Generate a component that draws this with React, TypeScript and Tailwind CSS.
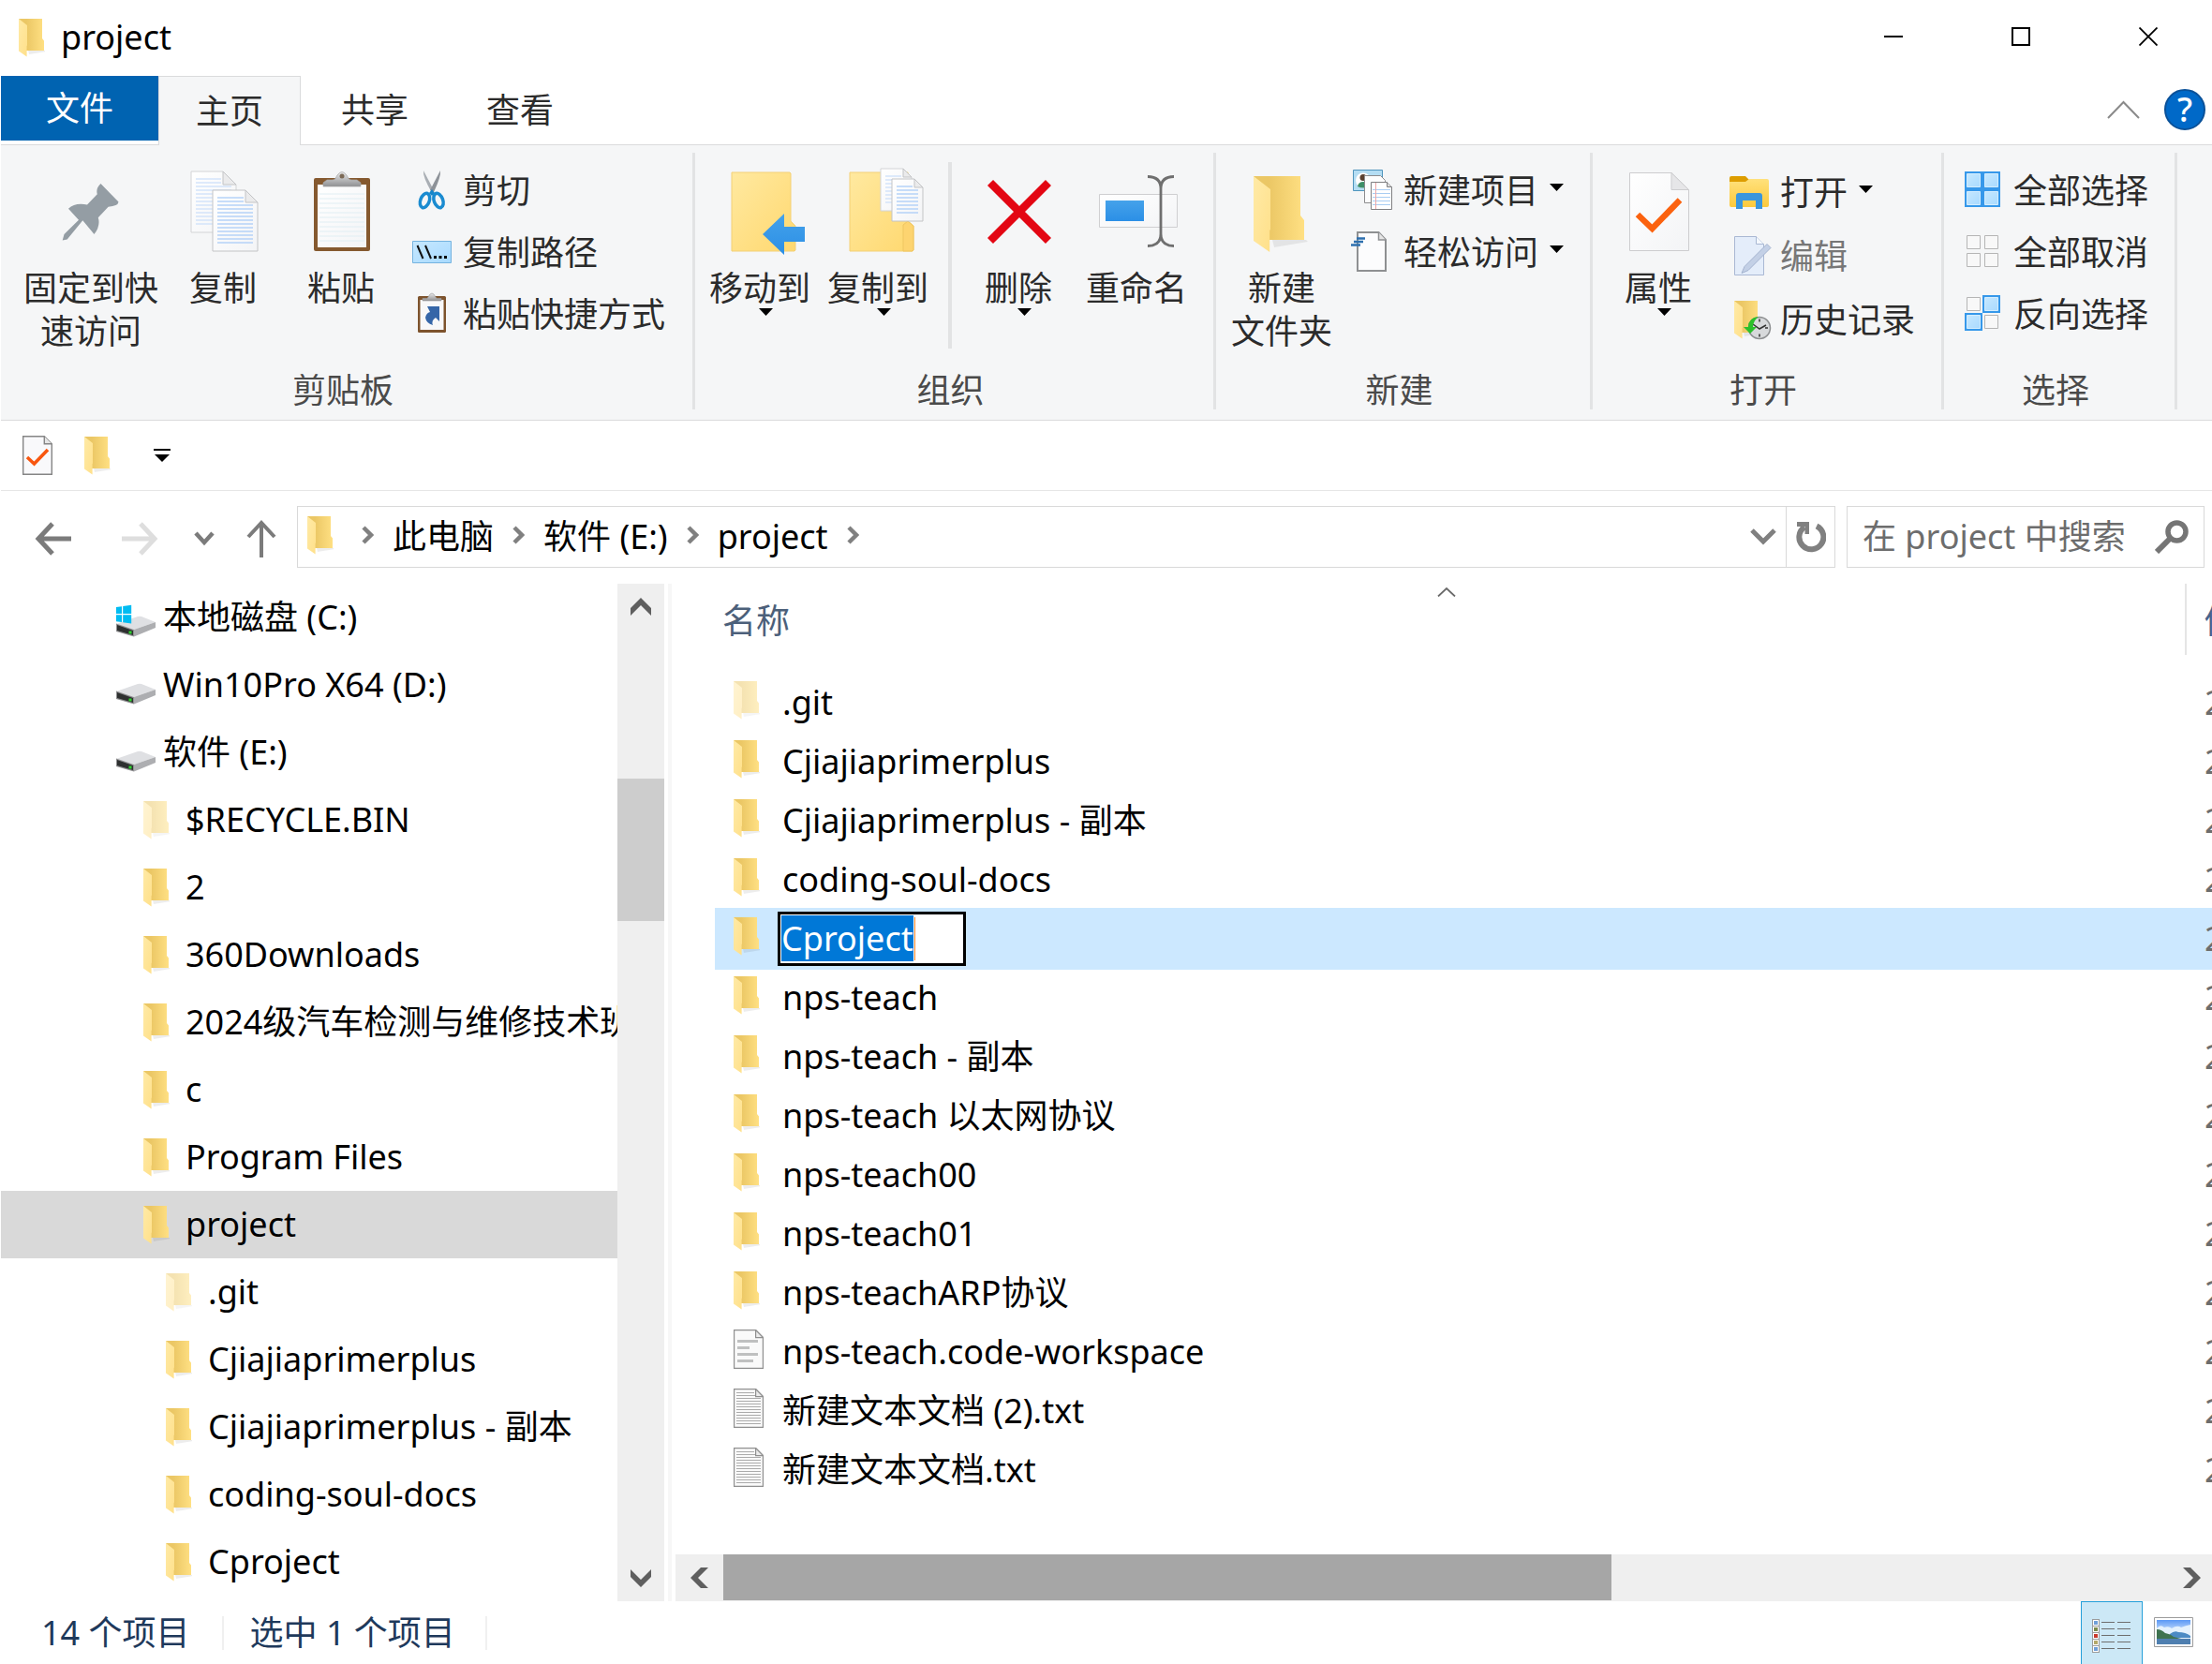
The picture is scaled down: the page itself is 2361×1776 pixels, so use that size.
import { useEffect, useRef, type ReactNode } from "react";

interface TreeNode {
  name: string;
  level: 1 | 2 | 3;
  icon: "system" | "drive" | "folder" | "hidden";
  current?: boolean;
}

interface FileEntry {
  name: string;
  icon: "folder" | "hidden" | "code" | "text";
  renaming?: boolean;
}

const TREE: TreeNode[] = [
  { name: "本地磁盘 (C:)", level: 1, icon: "system" },
  { name: "Win10Pro X64 (D:)", level: 1, icon: "drive" },
  { name: "软件 (E:)", level: 1, icon: "drive" },
  { name: "$RECYCLE.BIN", level: 2, icon: "hidden" },
  { name: "2", level: 2, icon: "folder" },
  { name: "360Downloads", level: 2, icon: "folder" },
  { name: "2024级汽车检测与维修技术班", level: 2, icon: "folder" },
  { name: "c", level: 2, icon: "folder" },
  { name: "Program Files", level: 2, icon: "folder" },
  { name: "project", level: 2, icon: "folder", current: true },
  { name: ".git", level: 3, icon: "hidden" },
  { name: "Cjiajiaprimerplus", level: 3, icon: "folder" },
  { name: "Cjiajiaprimerplus - 副本", level: 3, icon: "folder" },
  { name: "coding-soul-docs", level: 3, icon: "folder" },
  { name: "Cproject", level: 3, icon: "folder" },
];

const FILES: FileEntry[] = [
  { name: ".git", icon: "hidden" },
  { name: "Cjiajiaprimerplus", icon: "folder" },
  { name: "Cjiajiaprimerplus - 副本", icon: "folder" },
  { name: "coding-soul-docs", icon: "folder" },
  { name: "Cproject", icon: "folder", renaming: true },
  { name: "nps-teach", icon: "folder" },
  { name: "nps-teach - 副本", icon: "folder" },
  { name: "nps-teach 以太网协议", icon: "folder" },
  { name: "nps-teach00", icon: "folder" },
  { name: "nps-teach01", icon: "folder" },
  { name: "nps-teachARP协议", icon: "folder" },
  { name: "nps-teach.code-workspace", icon: "code" },
  { name: "新建文本文档 (2).txt", icon: "text" },
  { name: "新建文本文档.txt", icon: "text" },
];

const INDENT = { 1: "pl-[123px] gap-2", 2: "pl-[152px] gap-[17px]", 3: "pl-[176px] gap-[17px]" };

export default function App() {
  return (
    <div className="flex h-screen flex-col overflow-hidden bg-white pl-px font-['Noto_Sans','Noto_Sans_CJK_SC',sans-serif] text-[36px] leading-[46px] text-black">
      <Gradients />
      <TitleBar />
      <TabStrip />
      <Ribbon />
      <QuickAccess />
      <AddressBar />
      <main className="flex min-h-0 flex-1">
        <TreePane />
        <FilePane />
      </main>
      <StatusBar />
    </div>
  );
}

function TitleBar() {
  return (
    <header className="flex h-[81px] shrink-0 items-stretch justify-between">
      <div className="flex items-center gap-[17px] pb-0.5 pl-[19px]">
        <FolderIcon className="h-[42px] w-7" />
        <h1>project</h1>
      </div>
      <div className="flex">
        <button aria-label="最小化" className="flex w-[136px] items-center justify-center">
          <svg className="size-5" viewBox="0 0 20 20"><path d="M0 8h20" stroke="#000" strokeWidth="2" /></svg>
        </button>
        <button aria-label="最大化" className="flex w-[136px] items-center justify-center">
          <svg className="mb-1 size-5" viewBox="0 0 20 20"><path d="M1 1h18v18H1z" fill="none" stroke="#000" strokeWidth="2" /></svg>
        </button>
        <button aria-label="关闭" className="flex w-[136px] items-center justify-center">
          <svg className="mb-1 size-5" viewBox="0 0 20 20"><path d="M.5.5l19 19m0-19l-19 19" stroke="#000" strokeWidth="1.8" /></svg>
        </button>
      </div>
    </header>
  );
}

function TabStrip() {
  return (
    <nav className="flex h-[74px] shrink-0 border-b border-[#dadbdc] text-[#2b2b2b]">
      <button className="mb-1 w-[168px] bg-[#0063b1] text-white">文件</button>
      <button className="-mb-px w-[152px] border border-b-0 border-[#dadbdc] bg-[#f5f6f7]">主页</button>
      <button className="ml-[3px] w-[152px]">共享</button>
      <button className="ml-[3px] w-[152px]">查看</button>
      <div className="ml-auto flex items-center gap-[26px] pb-0.5 pr-[7px]">
        <button aria-label="折叠功能区">
          <svg className="h-5 w-[35px]" viewBox="0 0 35 20"><path d="M1 19L17.500 2 34 19" fill="none" stroke="#8a8a8a" strokeWidth="2" /></svg>
        </button>
        <button aria-label="帮助" className="flex size-11 items-center justify-center rounded-full border-2 border-[#0a5199] bg-[#0069c8] font-medium text-white">?</button>
      </div>
    </nav>
  );
}

function Ribbon() {
  return (
    <section className="flex h-[294px] shrink-0 border-b border-[#dadbdc] bg-[#f5f6f7] text-[#2b2b2b]">
      <Group label="剪贴板" className="pl-[18px] pr-[29px]">
        <BigButton lines={["固定到快", "速访问"]} wide icon={<PinArt />} />
        <BigButton lines={["复制"]} icon={<CopyArt />} />
        <BigButton lines={["粘贴"]} icon={<ClipboardArt />} />
        <div className="ml-[13px] pt-2">
          <SmallButton label="剪切" icon={<ScissorsArt />} />
          <SmallButton label="复制路径" icon={<PathArt />} />
          <SmallButton label="粘贴快捷方式" icon={<ShortcutArt />} />
        </div>
      </Group>
      <Group label="组织" className="pl-[6px] pr-[19px]">
        <BigButton lines={["移动到"]} menu icon={<MoveArt />} />
        <BigButton lines={["复制到"]} menu icon={<CopyToArt />} />
        <div className="ml-3 mr-2 mt-2.5 h-[199px] w-1 bg-[#e2e3e4]" />
        <BigButton lines={["删除"]} menu icon={<DeleteArt />} />
        <BigButton lines={["重命名"]} icon={<RenameArt />} />
      </Group>
      <Group label="新建" className="pl-[7px] pr-7">
        <BigButton lines={["新建", "文件夹"]} icon={<NewFolderArt />} />
        <div className="ml-[13px] pt-2">
          <SmallButton label="新建项目" menu icon={<NewItemArt />} />
          <SmallButton label="轻松访问" menu icon={<EasyAccessArt />} />
        </div>
      </Group>
      <Group label="打开" className="pl-[7px] pr-7">
        <BigButton lines={["属性"]} menu icon={<PropertiesArt />} />
        <div className="ml-[13px] pt-[9px]">
          <SmallButton label="打开" menu tall icon={<OpenArt />} />
          <SmallButton label="编辑" disabled tall icon={<EditArt />} />
          <SmallButton label="历史记录" tall icon={<HistoryArt />} />
        </div>
      </Group>
      <Group label="选择" className="pl-5 pr-7">
        <div className="pt-2">
          <SmallButton label="全部选择" icon={<SelectArt on={[true, true, true, true]} all />} />
          <SmallButton label="全部取消" icon={<SelectArt on={[false, false, false, false]} />} />
          <SmallButton label="反向选择" icon={<SelectArt on={[false, true, true, false]} />} />
        </div>
      </Group>
    </section>
  );
}

function Group({ label, className, children }: { label: string; className: string; children: ReactNode }) {
  return (
    <div className="mb-[11px] mt-2 flex flex-col border-r-3 border-[#e2e3e4]">
      <div className={`flex flex-1 items-start ${className}`}>{children}</div>
      <p className="pr-2 text-center leading-10 text-[#4a4a4a]">{label}</p>
    </div>
  );
}

function BigButton({ lines, icon, menu, wide }: { lines: string[]; icon: ReactNode; menu?: boolean; wide?: boolean }) {
  return (
    <button className={`flex flex-col items-center pt-3.5 ${wide ? "w-[156px]" : "w-[126px]"}`}>
      <svg className="mb-3 size-24 overflow-visible" viewBox="0 0 96 96">{icon}</svg>
      {lines.map((l) => <span key={l} className="whitespace-nowrap">{l}</span>)}
      {menu && <Triangle className="-mt-0.5 ml-3" />}
    </button>
  );
}

function SmallButton({ label, icon, menu, disabled, tall }: {
  label: string; icon: ReactNode; menu?: boolean; disabled?: boolean; tall?: boolean;
}) {
  return (
    <button
      disabled={disabled}
      className={`flex items-center gap-3 whitespace-nowrap disabled:text-[#777] ${tall ? "h-[68px]" : "h-[66px]"}`}
    >
      <svg className="h-11 w-[42px] overflow-visible" viewBox="0 0 42 44">{icon}</svg>
      {label}
      {menu && <Triangle className="mb-2" />}
    </button>
  );
}

function Triangle({ className }: { className: string }) {
  return <svg className={`h-2 w-[15px] ${className}`} viewBox="0 0 15 8"><path d="M0 0h15L7.500 8z" fill="#000" /></svg>;
}

function QuickAccess() {
  return (
    <div className="flex h-[75px] shrink-0 items-center border-b border-[#e6e6e6] pl-[23px]">
      <button aria-label="属性">
        <svg className="h-[42px] w-8" viewBox="0 0 32 42">
          <path d="M.7.7h22.600l8 8v32.600H.7z" fill="#f9f9fb" stroke="#858585" strokeWidth="1.400" />
          <path d="M23.300.7v8h8" fill="#e6e6e6" stroke="#858585" strokeWidth="1.400" />
          <path d="M5 23l7.500 7L27 15" fill="none" stroke="#f8560f" strokeWidth="3.500" />
        </svg>
      </button>
      <button aria-label="新建文件夹" className="ml-[34px]"><FolderIcon className="h-[42px] w-7" /></button>
      <button aria-label="自定义快速访问工具栏" className="ml-[46px]">
        <svg className="h-3.5 w-[18px]" viewBox="0 0 18 14"><path d="M0 0h18v2H0zM1 6h16l-8 8z" /></svg>
      </button>
    </div>
  );
}

function AddressBar() {
  const crumbs = ["此电脑", "软件 (E:)", "project"];
  return (
    <div className="flex h-[99px] shrink-0 items-start pl-[10px] pr-2 pt-4">
      <div className="flex h-[66px] items-center pt-1">
        <button aria-label="返回" className="flex w-[92px] justify-center">
          <svg className="h-9 w-10" viewBox="0 0 40 36"><path d="M39 18H4M19 2L4 18l15 16" fill="none" stroke="#7b7b7b" strokeWidth="5" /></svg>
        </button>
        <button aria-label="前进" disabled className="flex w-[92px] justify-center">
          <svg className="h-9 w-10" viewBox="0 0 40 36"><path d="M1 18h35M21 2l15 16-15 16" fill="none" stroke="#dedede" strokeWidth="5" /></svg>
        </button>
        <button aria-label="最近浏览的位置" className="flex w-[46px] justify-center">
          <svg className="h-4 w-[22px]" viewBox="0 0 22 16"><path d="M2 2l9 10 9-10" fill="none" stroke="#7b7b7b" strokeWidth="4.500" /></svg>
        </button>
        <button aria-label="上移" className="flex w-[76px] justify-center">
          <svg className="h-10 w-8" viewBox="0 0 32 40"><path d="M16 40V3M2 18L16 3l14 15" fill="none" stroke="#7b7b7b" strokeWidth="4" /></svg>
        </button>
      </div>
      <div className="flex h-[66px] flex-1 items-center border border-[#d9d9d9] pl-2.5">
        <FolderIcon className="mb-1 mr-[30px] h-[42px] w-7" />
        <Chevron />
        {crumbs.map((c) => (
          <span key={c} className="flex items-center">
            <button className="mx-5 whitespace-nowrap">{c}</button>
            <Chevron />
          </span>
        ))}
        <button aria-label="以前的位置" className="ml-auto px-2.5">
          <svg className="h-[18px] w-7" viewBox="0 0 28 18"><path d="M2 2l12 12L26 2" fill="none" stroke="#808080" strokeWidth="5" /></svg>
        </button>
        <button aria-label="刷新" className="flex h-full w-[52px] items-center justify-center border-l border-[#d9d9d9]">
          <svg className="h-[34px] w-8" viewBox="0 0 32 34">
            <path d="M22 5.500A13 13 0 1 1 9 6.500" fill="none" stroke="#808080" strokeWidth="6" />
            <path d="M1 1h13v13h-4.500V6H1z" fill="#808080" />
          </svg>
        </button>
      </div>
      <label className="ml-3 flex h-[66px] w-[382px] items-center border border-[#d9d9d9] pl-4 pr-4">
        <input aria-label="搜索" placeholder="在 project 中搜索" className="min-w-0 flex-1 outline-none placeholder:text-[#6d6d6d]" />
        <svg className="size-9" viewBox="0 0 36 36">
          <circle cx="23.500" cy="12.500" r="9.500" fill="none" stroke="#757575" strokeWidth="5.500" />
          <path d="M17 19L2 34" stroke="#757575" strokeWidth="6" />
        </svg>
      </label>
    </div>
  );
}

function Chevron() {
  return <svg className="mb-1 h-5 w-[13px]" viewBox="0 0 13 20"><path d="M2 2l8 8-8 8" fill="none" stroke="#808080" strokeWidth="4.500" /></svg>;
}

function TreePane() {
  return (
    <aside className="flex w-[716px] shrink-0 border-r-4 border-[#f7f7f7]">
      <ul className="min-w-0 flex-1 overflow-hidden">
        {TREE.map((n) => (
          <li key={`${n.level}-${n.name}`} className={`flex h-[72px] items-center whitespace-nowrap ${INDENT[n.level]} ${n.current ? "bg-[#d9d9d9]" : ""}`}>
            {n.level === 1
              ? <DriveIcon system={n.icon === "system"} />
              : <FolderIcon className={`h-[42px] w-7 shrink-0 ${n.icon === "hidden" ? "opacity-50" : ""}`} />}
            <span>{n.name}</span>
          </li>
        ))}
      </ul>
      <div className="mr-1 flex w-[50px] flex-col bg-[#efefef]">
        <button aria-label="向上滚动" className="flex h-[50px] items-center justify-center">
          <svg className="h-5 w-[22px]" viewBox="0 0 22 20"><path d="M0 19v-8L11 0l11 11v8L11 8z" fill="#5f5f5f" /></svg>
        </button>
        <div className="mt-[158px] h-[152px] bg-[#cdcdcd]" />
        <button aria-label="向下滚动" className="mt-auto flex h-[50px] items-center justify-center">
          <svg className="h-5 w-[22px]" viewBox="0 0 22 20"><path d="M0 1v8l11 11L22 9V1L11 12z" fill="#5f5f5f" /></svg>
        </button>
      </div>
    </aside>
  );
}

function FilePane() {
  return (
    <section className="flex min-w-0 flex-1 flex-col pl-1">
      <div className="min-h-0 flex-1 overflow-hidden pl-[42px]">
        <table className="w-full table-fixed border-separate border-spacing-0 text-left">
          <thead>
            <tr className="text-[#4c607a]">
              <th className="relative h-[76px] border-r-2 border-[#e5e5e5] py-0 pl-2 pt-1 font-normal">
                名称
                <svg className="absolute left-1/2 top-1 -ml-1 h-2.5 w-5 -translate-x-1/2" viewBox="0 0 20 10"><path d="M1 9.500L10 1l9 8.500" fill="none" stroke="#6a6a6a" strokeWidth="1.800" /></svg>
              </th>
              <th className="w-[27px] overflow-hidden whitespace-nowrap p-0 pl-[19px] pt-1 font-normal text-[#47638c]">修改日期</th>
            </tr>
            <tr aria-hidden="true" className="h-[18px]" />
          </thead>
          <tbody>
            {FILES.map((f) => <FileRow key={f.name} file={f} />)}
          </tbody>
        </table>
      </div>
      <div className="flex h-[50px] shrink-0 bg-[#efefef]">
        <button aria-label="向左滚动" className="flex w-[51px] items-center justify-center">
          <svg className="h-[22px] w-5" viewBox="0 0 20 22"><path d="M19 0h-8L0 11l11 11h8L8 11z" fill="#5f5f5f" /></svg>
        </button>
        <div className="mb-px flex-[947] bg-[#a6a6a6]" />
        <div className="flex-[597]" />
        <button aria-label="向右滚动" className="flex w-11 items-center justify-center">
          <svg className="h-[22px] w-5" viewBox="0 0 20 22"><path d="M1 0h8l11 11L9 22H1l11-11z" fill="#5f5f5f" /></svg>
        </button>
      </div>
    </section>
  );
}

function FileRow({ file }: { file: FileEntry }) {
  return (
    <tr className={`h-[63px] ${file.renaming ? "bg-[#cce8ff] shadow-[0_3px_0_#cce8ff]" : ""}`}>
      <td className="p-0 pl-5">
        <div className="flex items-center">
          <FileIcon kind={file.icon} />
          {file.renaming ? <RenameBox name={file.name} /> : <span className="ml-5 whitespace-nowrap pt-0.5">{file.name}</span>}
        </div>
      </td>
      <td className="overflow-hidden whitespace-nowrap p-0 pl-[19px] pt-0.5 text-[#6d6d6d]">2024</td>
    </tr>
  );
}

function RenameBox({ name }: { name: string }) {
  const ref = useRef<HTMLInputElement>(null);

  useEffect(() => {
    ref.current?.focus();
    ref.current?.select();
  }, []);

  return (
    <div className="relative ml-[15px] pt-0.5">
      <input
        ref={ref}
        aria-label="重命名"
        defaultValue={name}
        className="block h-[58px] w-[201px] border-3 border-black bg-white px-px leading-[46px] outline-none selection:bg-[#0078d7] selection:text-white"
      />
      {/* caret at the end of the selection */}
      <span className="absolute left-[146px] top-2 h-[46px] w-px bg-[#ff8728]" />
    </div>
  );
}

function StatusBar() {
  return (
    <footer className="flex h-[67px] shrink-0 items-stretch pl-[43px] text-[#1e395b]">
      <div className="flex items-center">
        <span className="border-r-2 border-[#f0f0f0] pr-[34px] leading-9">14 个项目</span>
        <span className="border-r-2 border-[#f0f0f0] pl-7 pr-8 leading-9">选中 1 个项目</span>
      </div>
      <div className="ml-auto flex">
        <button aria-label="详细信息" className="flex w-[66px] justify-center border border-b-0 border-[#26a0da] bg-[#cce8f6] pt-[18px]">
          <svg className="h-9 w-[42px]" viewBox="0 0 42 36">
            {["#6f9fd8", "#7a8a4a", "#c8382c", "#b3a86a", "#6f9fd8"].map((c, i) => (
              <g key={i}>
                <rect x=".5" y={0.500 + i * 7} width="7" height="7" fill="#fff" stroke="#9c9c9c" />
                <rect x="2" y={2 + i * 7} width="4" height="4" fill={c} />
                <path d={`M10 ${3.500 + i * 7}h14m3 0h14`} stroke="#6e6e6e" />
              </g>
            ))}
          </svg>
        </button>
        <button aria-label="大图标" className="flex w-[74px] items-center justify-center pb-0.5 pl-px pr-[9px]">
          <svg className="h-8 w-[42px]" viewBox="0 0 42 32">
            <path d="M.5.5h41v31H.5z" fill="#fff" stroke="#9c9c9c" />
            <path d="M3 3h36v26H3z" fill="url(#sky)" />
            <path d="M3 12q4-5 8-1 5-2 8 1 6-4 10-1 5-2 10-3v14H3z" fill="#e4f1fd" />
            <path d="M17 18q5-4 9-2 8 0 13 4v2H17z" fill="#4b8ac4" />
            <path d="M3 13q5 0 9 4 6 1 9 4l8 2H3z" fill="#3f7350" />
            <path d="M3 23h36v6H3z" fill="#4f7fb0" />
          </svg>
        </button>
      </div>
    </footer>
  );
}

/* Icons */

function Gradients() {
  return (
    <svg className="absolute size-0" aria-hidden="true">
      <defs>
        <linearGradient id="folderBack"><stop offset=".3" stopColor="#ebc765" /><stop offset="1" stopColor="#ffe083" /></linearGradient>
        <linearGradient id="folderFlap" x2="1" y2="1"><stop offset="0" stopColor="#ffeaa6" /><stop offset="1" stopColor="#ffe08a" /></linearGradient>
        <linearGradient id="folderFlat" x2="1" y2="1"><stop offset="0" stopColor="#ffe9a0" /><stop offset="1" stopColor="#ffd86f" /></linearGradient>
        <linearGradient id="paper" x2="1" y2="1"><stop offset="0" stopColor="#fff" /><stop offset="1" stopColor="#f3f4f6" /></linearGradient>
        <linearGradient id="blue" y2="1" x2="0"><stop offset="0" stopColor="#45a2ea" /><stop offset="1" stopColor="#2b8fe6" /></linearGradient>
        <linearGradient id="cell" x2="1" y2="1"><stop offset="0" stopColor="#c6e8ff" /><stop offset="1" stopColor="#a8daff" /></linearGradient>
        <linearGradient id="explorer" y2="1" x2="0"><stop offset="0" stopColor="#ffe17c" /><stop offset="1" stopColor="#fcc93c" /></linearGradient>
        <linearGradient id="sky" y2="1" x2="0"><stop offset="0" stopColor="#5b98f5" /><stop offset=".6" stopColor="#e5f2ff" /></linearGradient>
        <linearGradient id="metal" y2="1" x2="0"><stop offset="0" stopColor="#e9e9ea" /><stop offset="1" stopColor="#8f9092" /></linearGradient>
      </defs>
    </svg>
  );
}

function FolderShape() {
  return (
    <>
      <path d="M10 34h18l1 1-18 3z" fill="#000" opacity=".07" />
      <path d="M0 0h25v21l2 2.500V34H8z" fill="url(#folderBack)" />
      <path d="M0 0l9 7v21.500L8.600 29v11.500L0 34.500z" fill="url(#folderFlap)" />
    </>
  );
}

function FolderIcon({ className }: { className: string }) {
  return <svg className={className} viewBox="0 -1 28 42"><FolderShape /></svg>;
}

function DriveIcon({ system }: { system: boolean }) {
  return (
    <svg className="size-[42px] shrink-0" viewBox="0 0 42 42">
      <path d="M0 28l23-8q2-.5 4 0l15 6-23 8z" fill="#dfe0e3" />
      <path d="M19 34l23-8v6l-23 9.500z" fill="#adaeb1" />
      <path d="M0 27.500l19 6.500v7.500L0 36z" fill="#8f8f91" />
      <path d="M1 29l17 6v5L1 35z" fill="#2e3030" />
      <path d="M13.500 35.500h3v3h-3z" fill="#2fd32f" />
      {system && <path d="M0 10l6-.8V17H0zM7.200 9l9-1.300V17h-9zM0 18.200h6V26l-6-.8zM7.200 18.200h9v9.300l-9-1.300z" fill="#00bcf2" />}
    </svg>
  );
}

function FileIcon({ kind }: { kind: FileEntry["icon"] }) {
  if (kind === "folder" || kind === "hidden") {
    return <FolderIcon className={`mb-1 mr-1 h-[42px] w-7 ${kind === "hidden" ? "opacity-50" : ""}`} />;
  }
  return (
    <svg className="mb-1 h-[42px] w-8" viewBox="0 0 32 42">
      <path d="M.6.6h23l7.800 8v32.800H.6z" fill="#fafafa" stroke="#8f8f8f" strokeWidth="1.200" />
      {kind === "code"
        ? <path d="M4 12.500h22M4 19.500h13M4 26.500h22M4 33.500h17" stroke="#bfc0c0" strokeWidth="3" />
        : <path d="M3 4.500h19M3 7.500h20M3 10.500h26M3 13.500h26M3 16.500h26M3 19.500h26M3 22.500h26M3 25.500h26M3 28.500h26M3 31.500h26M3 34.500h26M3 37.500h26" stroke="#ababab" />}
      <path d="M23.600.6v8h7.800z" fill="#ececec" stroke="#8f8f8f" strokeWidth="1.200" />
    </svg>
  );
}

// Sheet with a folded corner and ruled lines
function Page({ x, y, w, h, fold, pale }: { x: number; y: number; w: number; h: number; fold: number; pale?: boolean }) {
  const rules = [];
  for (let ly = 8; ly < h - 6; ly += 4) rules.push(`M${x + 5} ${y + ly}H${ly < fold + 2 ? x + w - fold - 2 : x + w - 5}`);
  return (
    <g strokeWidth="1">
      <path d={`M${x} ${y}h${w - fold}l${fold} ${fold}v${h - fold}h${-w}z`} fill="url(#paper)" stroke={pale ? "#d3d4d6" : "#c3c4c6"} />
      <path d={rules.join("")} stroke={pale ? "#d3e4fa" : "#b5d2f7"} strokeWidth="1.300" />
      <path d={`M${x + w - fold} ${y}v${fold}h${fold}z`} fill="#ebebec" stroke="#c3c4c6" />
    </g>
  );
}

function PinArt() {
  return <path d="M58.500 19L77.500 38.500Q77 43 66.600 43.700L55.800 55.300Q58.500 64 51.500 73L39.300 58.300 22.700 78.500 17.700 79.500 19.500 73 35 57.700 24 45.700Q31 39 44 41.500L54.800 30.300Q53 24 58.500 19z" fill="#949da4" />;
}

function CopyArt() {
  return (
    <>
      <Page x={14} y={6} w={48} h={65} fold={14} pale />
      <Page x={37} y={26} w={48} h={65} fold={13} />
    </>
  );
}

function ClipboardArt() {
  return (
    <>
      <rect x="19" y="13" width="60" height="78" rx="2" fill="#85592f" />
      <path d="M23 20h52v67H23z" fill="url(#paper)" />
      <path d="M25 30h48M25 35h48M25 40h48M25 45h48M25 50h48M25 55h48M25 60h48M25 65h48M25 70h48M25 75h48M25 80h48" stroke="#e0eef3" />
      <path d="M29 22v-4l4-3h6q3 0 5-5 5-7 10 0 2 5 5 5h6l4 3v4z" fill="url(#metal)" stroke="#a3a3a5" strokeWidth=".7" />
      <circle cx="49" cy="11" r="2.500" fill="#7c6a56" />
    </>
  );
}

function MoveArt() {
  return (
    <>
      <path d="M18 7h62l1 1v51l5 5v26l-1 1H18z" fill="url(#folderFlat)" stroke="#f3d077" strokeWidth="1" />
      <path d="M51 73l23-22v14h22v16H74v14z" fill="url(#blue)" />
    </>
  );
}

function CopyToArt() {
  return (
    <>
      <path d="M18 7h62v52l6 5v26l-1 1H18z" fill="url(#folderFlat)" stroke="#f3d077" strokeWidth="1" />
      <path d="M75 91V63l5-4 6 5v26l-1 1z" fill="#fdd470" stroke="#efc660" />
      <Page x={51} y={3} w={33} h={45} fold={9} pale />
      <Page x={63} y={14} w={33} h={45} fold={9} />
    </>
  );
}

function DeleteArt() {
  return <path d="M18 18l62 62M80 18L18 80" stroke="#e30613" strokeWidth="8.500" />;
}

function RenameArt() {
  return (
    <>
      <path d="M8.500 30.500h83v35h-83z" fill="url(#paper)" stroke="#cfcfd1" />
      <path d="M15 37h41v22H15z" fill="url(#blue)" />
      <path d="M60 11.500q14 0 14 13v48q0 13-14 13M88 11.500q-14 0-14 13v48q0 13 14 13" fill="none" stroke="#6f6f6f" strokeWidth="2.800" />
    </>
  );
}

function NewFolderArt() {
  return <g transform="translate(18 11) scale(2)"><FolderShape /></g>;
}

function PropertiesArt() {
  return (
    <>
      <path d="M17.500 7.500H62l18.500 18v65h-63z" fill="url(#paper)" stroke="#cdcdcf" />
      <path d="M62 7.500v18h18.500z" fill="#e6e6e8" stroke="#cdcdcf" />
      <path d="M26 52l15.500 15L71 36.500" fill="none" stroke="#fb620f" strokeWidth="6.500" />
    </>
  );
}

function ScissorsArt() {
  return (
    <>
      <path d="M12 0q-1 6 8 22l3-1z" fill="#a9aeb4" />
      <path d="M30 0q1 6-7 23l-4-2z" fill="#8d9298" />
      <path d="M21 20l3 4-3 3-3-3z" fill="#1686c9" />
      <ellipse cx="13.500" cy="32" rx="4.700" ry="8" transform="rotate(20 13.500 32)" fill="none" stroke="#1a8bd0" strokeWidth="3.500" />
      <ellipse cx="28" cy="32" rx="4.700" ry="8" transform="rotate(-20 28 32)" fill="none" stroke="#1a8bd0" strokeWidth="3.500" />
    </>
  );
}

function PathArt() {
  return (
    <>
      <path d="M.5 9.500h41v23H.5z" fill="url(#cell)" stroke="#75b3df" />
      <path d="M5.500 14l6 14M14 14l6 14" stroke="#111" strokeWidth="2" />
      <path d="M23 25h3v3h-3zM28.500 25h3v3h-3zM34 25h3v3h-3z" />
    </>
  );
}

function ShortcutArt() {
  return (
    <>
      <rect x="6" y="2" width="30" height="39" rx="1.500" fill="#7d532d" />
      <path d="M8.500 6h25v32h-25z" fill="#f8f8f9" />
      <path d="M11 7V4.500h5L19 0q2-2 4 0l3 4.500h5V7z" fill="url(#metal)" stroke="#9c9c9e" strokeWidth=".6" />
      <path d="M16 13h13v16l-4-4q-5 3-3 8-7-2-8-8 1-5 5-6z" fill="#3566a8" />
    </>
  );
}

function NewItemArt() {
  return (
    <>
      <path d="M.5-.5h31v22H.5z" fill="#b4ddf3" stroke="#4f95bd" />
      <circle cx="11" cy="10.500" r="8" fill="#fff" />
      <circle cx="11" cy="7.500" r="3.500" fill="#5a4030" />
      <path d="M5 17q1-5 6-5t6 5q-6 3-12 0z" fill="#3e8f68" />
      <path d="M12.500 5.500h17l5 5v24h-22z" fill="#fdfdfd" stroke="#8c8c8e" />
      <path d="M19.500 12.500h17l5 5v24h-22z" fill="#fff" stroke="#7f7f81" />
      <path d="M21 20.500h19M21 24.500h19M21 28.500h19M21 32.500h19M21 36.500h19" stroke="#a9cdf2" />
      <path d="M24.500 13v28" stroke="#eda7a7" />
      <path d="M36.500 12.500v5h5" fill="#ddd" stroke="#7f7f81" />
    </>
  );
}

function EasyAccessArt() {
  return (
    <>
      <path d="M5 0h22.500l7.500 8v33H5z" fill="#fcfcfd" stroke="#8e9092" strokeWidth="2" />
      <path d="M27.500 0v8H35" fill="#e6e6e6" stroke="#8e9092" strokeWidth="1.500" />
      <path d="M4 6.500h9M1 10h10M-2 13.500H8" stroke="#2d6fae" strokeWidth="2.400" />
    </>
  );
}

function OpenArt() {
  return (
    <>
      <path d="M0 6q0-2 2-2h15l4 4-3 4H0z" fill="#dd9d00" />
      <path d="M0 10h17l4-3h19q2 0 2 2v26q0 2-2 2H2q-2 0-2-2z" fill="url(#explorer)" />
      <path d="M7 39V25q0-3 3-3h22q3 0 3 3v14h-7v-9H14v9z" fill="#3a96dd" />
    </>
  );
}

function EditArt() {
  return (
    <>
      <path d="M5.500.5h23l8 8v33h-31z" fill="#e4edfa" stroke="#a9b8d3" />
      <path d="M28.500.5v8h8" fill="#f4f8fe" stroke="#a9b8d3" />
      <path d="M13 39.500l3-7L40 8.500l4 4-24 24z" fill="#c3d0e6" stroke="#a4b3cf" />
    </>
  );
}

function HistoryArt() {
  return (
    <>
      <g transform="translate(5 1)"><FolderShape /></g>
      <circle cx="32" cy="30" r="11.500" fill="#d7d9db" stroke="#8d8f91" strokeWidth="1.500" />
      <path d="M25 26l7 5 7-4M32 20.500v3M32 36.500v3M41 30h-3" fill="none" stroke="#333" strokeWidth="1.500" />
      <path d="M31 18q-11 1-11 11h-5l7 7 7-7h-4q0-6 6-11z" fill="#2bc02b" />
    </>
  );
}

function SelectArt({ on, all }: { on: boolean[]; all?: boolean }) {
  return (
    <>
      {all && <path d="M2 1h38v38H2z" fill="#3698ea" />}
      {on.map((sel, i) => {
        const x = i % 2 ? 23 : 4;
        const y = i < 2 ? 3 : 22;
        return sel
          ? (
            <g key={i}>
              <path d={`M${x - 2} ${y - 2}h19v19h-19z`} fill="#3698ea" />
              <path d={`M${x + 0.500} ${y + 0.500}h14v14h-14z`} fill="url(#cell)" stroke="#d3edff" />
            </g>
          )
          : <path key={i} d={`M${x + 0.500} ${y + 0.500}h14v14h-14z`} fill="#f8f8f8" stroke="#b5b5b5" />;
      })}
    </>
  );
}
